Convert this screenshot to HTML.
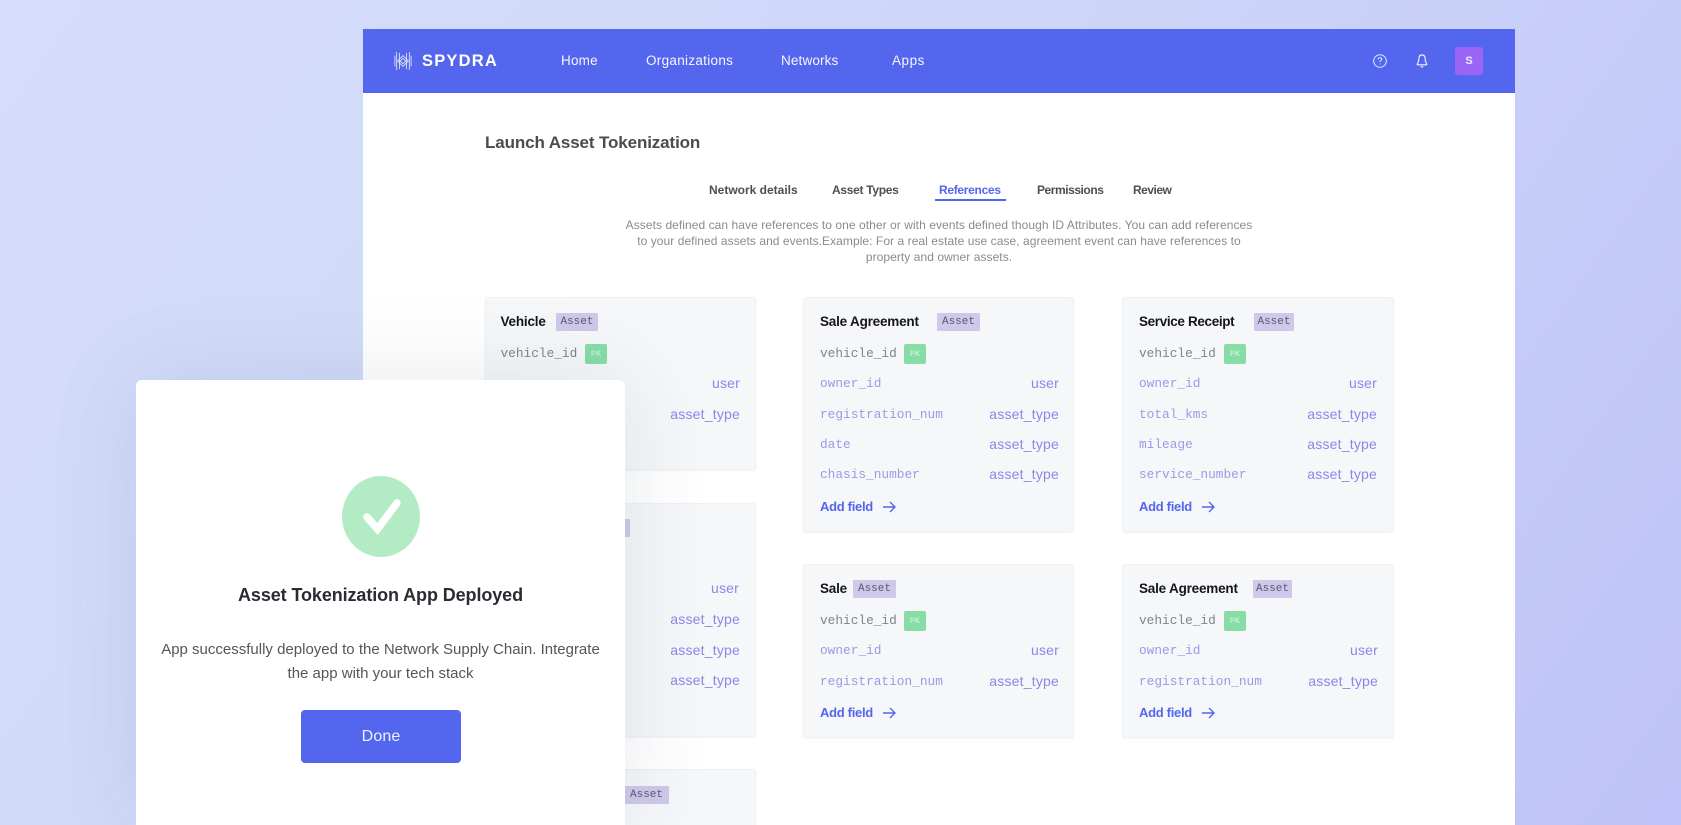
<!DOCTYPE html>
<html><head><meta charset="utf-8"><title>Spydra</title>
<style>
html,body{margin:0;padding:0;width:1681px;height:825px;overflow:hidden}
body{position:relative;font-family:"Liberation Sans",sans-serif;background:linear-gradient(125deg,#d6ddfb 0%,#d1daf9 30%,#c9d0f8 65%,#bec2f8 100%)}
div,span.t{position:absolute}
#w{left:0;top:0;width:1681px;height:825px;overflow:hidden;filter:blur(.35px)}
.t{position:absolute;white-space:nowrap;line-height:20px;height:20px}
.panel{left:363px;top:29px;width:1152px;height:796px;background:#fff}
.nav{left:363px;top:29px;width:1152px;height:64px;background:#5465ee}
.n{color:#fff;font-size:13.5px;top:51px;opacity:.95;letter-spacing:.2px}
.tab{font-size:12px;font-weight:bold;color:#4f4f4f;top:180px}
.d{font-size:12px;color:#8b8b8b;left:563px;width:752px;text-align:center;letter-spacing:.06px}
.card{background:#f5f7f9;border:1px solid #eff1f4;border-radius:3px;box-sizing:border-box;box-shadow:0 1px 2px rgba(40,50,80,.05)}
.h{font-size:13.5px;font-weight:bold;color:#15151a;letter-spacing:-.2px}
.b{font-family:"Liberation Mono",monospace;font-size:11px;color:#5b5870;background:#cfc8ea;border-radius:1px;text-align:center;line-height:19px;height:18px}
.pk{font-size:8.5px;color:#d8f5e3;background:#86dda6;border-radius:2px;text-align:center;line-height:20px;height:20px;width:22px;font-family:"Liberation Mono",monospace}
.v{font-family:"Liberation Mono",monospace;font-size:12.8px;color:#7f8588}
.m{font-family:"Liberation Mono",monospace;font-size:12.8px;color:#a297e6}
.r{font-size:14px;letter-spacing:.2px;color:#9184e9;margin-top:-1px}
.a{font-size:13px;font-weight:bold;color:#5465ee;letter-spacing:-.3px}
.modal{left:136px;top:380px;width:489px;height:445px;background:#fff;border-radius:6px 6px 0 0;box-shadow:0 0 90px rgba(60,70,110,.12)}
</style></head><body>
<div id="w">
<div class="panel"></div>
<div class="nav"></div>

<svg style="position:absolute;left:394px;top:50px" width="18" height="22" viewBox="0 0 20 24" fill="none" stroke="#fff" stroke-width=".9" opacity=".9">
<path d="M3 2V22M6 3V21M14 3V21M17 2V22M1 6V18M19 6V18"/>
<path d="M10 6L16 12L10 18L4 12Z"/><path d="M10 9L13 12L10 15L7 12Z"/>
</svg>
<span class="t" style="left:422px;top:51px;font-size:16.5px;font-weight:bold;color:#fff;letter-spacing:1.2px">SPYDRA</span>
<span class="t n" style="left:561px">Home</span>
<span class="t n" style="left:646px;letter-spacing:.3px">Organizations</span>
<span class="t n" style="left:781px;letter-spacing:.15px">Networks</span>
<span class="t n" style="left:892px;letter-spacing:.55px">Apps</span>

<svg style="position:absolute;left:1372px;top:53px" width="16" height="16" viewBox="0 0 16 16" fill="none" stroke="#fff" stroke-width="1" opacity=".85">
<circle cx="8" cy="8" r="6.3"/><path d="M6.2 6.3C6.3 5.2 7.1 4.8 8 4.8C9 4.8 9.8 5.4 9.8 6.3C9.8 7.5 8 7.6 8 9"/><path d="M8 10.6V11.4"/>
</svg>
<svg style="position:absolute;left:1415px;top:53px" width="14" height="16" viewBox="0 0 16 18" fill="none" stroke="#fff" stroke-width="1.3" opacity=".95">
<path d="M8 2C5.4 2 4.4 4 4.4 6.4C4.4 9.5 3.6 11 2.6 12.6C2.4 13 2.6 13.4 3 13.4H13C13.4 13.4 13.6 13 13.4 12.6C12.4 11 11.6 9.5 11.6 6.4C11.6 4 10.6 2 8 2Z"/><path d="M6.6 15.2C7.2 16 8.8 16 9.4 15.2"/>
</svg>
<div style="left:1455px;top:47px;width:28px;height:28px;border-radius:3px;background:#9b66f5"></div>
<span class="t" style="left:1455px;width:28px;text-align:center;top:51px;font-size:11px;font-weight:bold;color:#f3e9ff">S</span>

<span class="t" style="left:485px;top:133px;font-size:17px;font-weight:bold;color:#4b4b4f;letter-spacing:-.12px">Launch Asset Tokenization</span>

<span class="t tab" style="left:709px">Network details</span>
<span class="t tab" style="left:832px;letter-spacing:-.3px">Asset Types</span>
<span class="t tab" style="left:939px;color:#5465ee;letter-spacing:-.3px">References</span>
<span class="t tab" style="left:1037px;letter-spacing:-.45px">Permissions</span>
<span class="t tab" style="left:1133px;letter-spacing:-.5px">Review</span>
<div style="left:935px;top:199px;width:71px;height:2px;background:#5465ee"></div>

<span class="t d" style="top:215px">Assets defined can have references to one other or with events defined though ID Attributes. You can add references</span>
<span class="t d" style="top:231px">to your defined assets and events.Example: For a real estate use case, agreement event can have references to</span>
<span class="t d" style="top:247px">property and owner assets.</span>

<!-- column 1 -->
<div class="card" style="left:485px;top:297px;width:271px;height:173px"></div>
<span class="t h" style="left:500.5px;top:312px">Vehicle</span>
<div class="b" style="left:556px;top:313px;width:42px">Asset</div>
<span class="t v" style="left:500.5px;top:344px">vehicle_id</span>
<div class="pk" style="left:585px;top:344px">PK</div>
<span class="t r" style="right:941px;top:374px">user</span>
<span class="t r" style="right:941px;top:405px">asset_type</span>

<div class="card" style="left:485px;top:503px;width:271px;height:234px"></div>
<div class="b" style="left:600px;top:519px;width:30px"></div>
<span class="t r" style="right:942px;top:579px">user</span>
<span class="t r" style="right:941px;top:610px">asset_type</span>
<span class="t r" style="right:941px;top:641px">asset_type</span>
<span class="t r" style="right:941px;top:671px">asset_type</span>

<div class="card" style="left:485px;top:769px;width:271px;height:70px"></div>
<div class="b" style="left:600px;top:786px;width:69px"><span class="t" style="left:30px;top:-1px">Asset</span></div>

<!-- column 2 -->
<div class="card" style="left:803px;top:297px;width:271px;height:235px"></div>
<span class="t h" style="left:820px;top:312px">Sale Agreement</span>
<div class="b" style="left:937px;top:313px;width:43px">Asset</div>
<span class="t v" style="left:820px;top:344px">vehicle_id</span>
<div class="pk" style="left:904px;top:344px">PK</div>
<span class="t m" style="left:820px;top:374px">owner_id</span><span class="t r" style="right:622px;top:374px">user</span>
<span class="t m" style="left:820px;top:405px">registration_num</span><span class="t r" style="right:622px;top:405px">asset_type</span>
<span class="t m" style="left:820px;top:435px">date</span><span class="t r" style="right:622px;top:435px">asset_type</span>
<span class="t m" style="left:820px;top:465px">chasis_number</span><span class="t r" style="right:622px;top:465px">asset_type</span>
<span class="t a" style="left:820px;top:497px">Add field</span>
<svg style="position:absolute;left:881px;top:500px" width="16" height="14" viewBox="0 0 16 14" fill="none" stroke="#5465ee" stroke-width="1.4"><path d="M2 7H14M9 2L14 7L9 12"/></svg>

<div class="card" style="left:803px;top:564px;width:271px;height:174px"></div>
<span class="t h" style="left:820px;top:579px">Sale</span>
<div class="b" style="left:853px;top:580px;width:43px">Asset</div>
<span class="t v" style="left:820px;top:611px">vehicle_id</span>
<div class="pk" style="left:904px;top:611px">PK</div>
<span class="t m" style="left:820px;top:641px">owner_id</span><span class="t r" style="right:622px;top:641px">user</span>
<span class="t m" style="left:820px;top:672px">registration_num</span><span class="t r" style="right:622px;top:672px">asset_type</span>
<span class="t a" style="left:820px;top:703px">Add field</span>
<svg style="position:absolute;left:881px;top:706px" width="16" height="14" viewBox="0 0 16 14" fill="none" stroke="#5465ee" stroke-width="1.4"><path d="M2 7H14M9 2L14 7L9 12"/></svg>

<!-- column 3 -->
<div class="card" style="left:1122px;top:297px;width:272px;height:235px"></div>
<span class="t h" style="left:1139px;top:312px;letter-spacing:-.35px">Service Receipt</span>
<div class="b" style="left:1254px;top:313px;width:40px">Asset</div>
<span class="t v" style="left:1139px;top:344px">vehicle_id</span>
<div class="pk" style="left:1224px;top:344px">PK</div>
<span class="t m" style="left:1139px;top:374px">owner_id</span><span class="t r" style="right:304px;top:374px">user</span>
<span class="t m" style="left:1139px;top:405px">total_kms</span><span class="t r" style="right:304px;top:405px">asset_type</span>
<span class="t m" style="left:1139px;top:435px">mileage</span><span class="t r" style="right:304px;top:435px">asset_type</span>
<span class="t m" style="left:1139px;top:465px">service_number</span><span class="t r" style="right:304px;top:465px">asset_type</span>
<span class="t a" style="left:1139px;top:497px">Add field</span>
<svg style="position:absolute;left:1200px;top:500px" width="16" height="14" viewBox="0 0 16 14" fill="none" stroke="#5465ee" stroke-width="1.4"><path d="M2 7H14M9 2L14 7L9 12"/></svg>

<div class="card" style="left:1122px;top:564px;width:272px;height:174px"></div>
<span class="t h" style="left:1139px;top:579px">Sale Agreement</span>
<div class="b" style="left:1253px;top:580px;width:39px">Asset</div>
<span class="t v" style="left:1139px;top:611px">vehicle_id</span>
<div class="pk" style="left:1224px;top:611px">PK</div>
<span class="t m" style="left:1139px;top:641px">owner_id</span><span class="t r" style="right:303px;top:641px">user</span>
<span class="t m" style="left:1139px;top:672px">registration_num</span><span class="t r" style="right:303px;top:672px">asset_type</span>
<span class="t a" style="left:1139px;top:703px">Add field</span>
<svg style="position:absolute;left:1200px;top:706px" width="16" height="14" viewBox="0 0 16 14" fill="none" stroke="#5465ee" stroke-width="1.4"><path d="M2 7H14M9 2L14 7L9 12"/></svg>

<!-- modal -->
<div class="modal"></div>
<div style="left:342px;top:476px;width:78px;height:81px;border-radius:50%;background:#b3ebc5"></div>
<svg style="position:absolute;left:342px;top:476px" width="78" height="81" viewBox="0 0 78 81" fill="none" stroke="#fff" stroke-width="7.5" stroke-linecap="round" stroke-linejoin="miter"><path d="M25 41L35.5 53L55 27"/></svg>
<span class="t" style="left:136px;width:489px;text-align:center;top:585px;font-size:18px;font-weight:bold;color:#2b2b33;letter-spacing:-.1px">Asset Tokenization App Deployed</span>
<span class="t" style="left:136px;width:489px;text-align:center;top:640px;font-size:15px;color:#55555c">App successfully deployed to the Network Supply Chain. Integrate</span>
<span class="t" style="left:136px;width:489px;text-align:center;top:664px;font-size:15px;color:#55555c">the app with your tech stack</span>
<div style="left:301px;top:710px;width:160px;height:53px;background:#5465ee;border-radius:4px"></div>
<span class="t" style="left:301px;width:160px;text-align:center;top:727px;font-size:16px;color:#eef0ff;letter-spacing:.1px">Done</span>
</div>
</body></html>
